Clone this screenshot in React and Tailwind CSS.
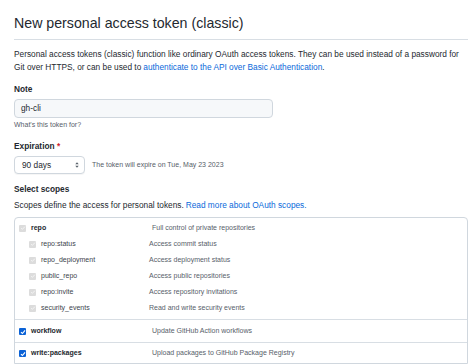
import React from "react";

const font = { fontFamily: '"Liberation Sans", Arial, sans-serif' };

function Check({ checked, disabled }) {
  if (disabled) {
    return (
      <span className="flex h-[7px] w-[7px] shrink-0 items-center justify-center rounded-[1px] bg-[#dcdcdc]">
        <svg viewBox="0 0 8 8" className="h-[6px] w-[6px]">
          <path d="M1.5 4.2 L3.2 5.8 L6.5 2.2" fill="none" stroke="#f4f4f4" strokeWidth="1.3" />
        </svg>
      </span>
    );
  }
  return (
    <span
      className={`flex h-[7px] w-[7px] shrink-0 items-center justify-center rounded-[1px] ${
        checked ? "bg-[#0b62d6]" : "border border-[#767676] bg-white"
      }`}
    >
      {checked && (
        <svg viewBox="0 0 8 8" className="h-[6px] w-[6px]">
          <path d="M1.3 4.2 L3.2 6 L6.7 1.8" fill="none" stroke="#fff" strokeWidth="1.5" />
        </svg>
      )}
    </span>
  );
}

const repoScopes = [
  ["repo:status", "Access commit status"],
  ["repo_deployment", "Access deployment status"],
  ["public_repo", "Access public repositories"],
  ["repo:invite", "Access repository invitations"],
  ["security_events", "Read and write security events"],
];

export default function App() {
  return (
    <div className="h-[364px] w-[474px] overflow-hidden bg-white pl-[14px] pr-[6px] text-[#24292f]" style={font}>
      {/* Title */}
      <div className="border-b border-[#d8dee4] pt-[15px] pb-[8px]">
        <h2 className="text-[14.2px] leading-[16px] font-normal">New personal access token (classic)</h2>
      </div>

      <div className="mt-[8px] text-[8.3px] leading-[13px]">
        <div>
          Personal access tokens (classic) function like ordinary OAuth access tokens. They can be used instead of a password for
        </div>
        <div className="flex gap-[2px]">
          <span>Git over HTTPS, or can be used to</span>
          <span className="text-[#0969da]">authenticate to the API over Basic Authentication</span>
          <span className="-ml-[2px]">.</span>
        </div>
      </div>

      {/* Note */}
      <div className="mt-[9px] text-[8.3px] leading-[12px] font-bold">Note</div>
      <div className="mt-[4px] flex h-[19px] w-[259px] items-center rounded-[4px] border border-[#d0d7de] bg-[#f6f8fa] pl-[6px] text-[8.3px]">
        gh-cli
      </div>
      <div className="mt-[2px] text-[7px] leading-[10px] text-[#57606a]">What's this token for?</div>

      {/* Expiration */}
      <div className="mt-[10px] text-[8.3px] leading-[12px] font-bold">
        Expiration <span className="text-[#cf222e]">*</span>
      </div>
      <div className="mt-[4px] flex items-center">
        <div className="flex h-[18px] w-[71px] items-center justify-between rounded-[4px] border border-[#d0d7de] bg-white pl-[7px] pr-[5px] text-[8.3px] shadow-[0_1px_0_rgba(27,31,36,0.04)]">
          <span>90 days</span>
          <svg viewBox="0 0 6 8" className="h-[6px] w-[4px]">
            <path d="M3 0 L5.6 3 L0.4 3 Z M3 8 L0.4 5 L5.6 5 Z" fill="#57606a" />
          </svg>
        </div>
        <span className="ml-[7px] text-[7px] text-[#57606a]">The token will expire on Tue, May 23 2023</span>
      </div>

      {/* Scopes */}
      <div className="mt-[9px] text-[8.3px] leading-[12px] font-bold">Select scopes</div>
      <div className="mt-[4px] flex gap-[2px] text-[8.3px] leading-[12px]">
        <span>Scopes define the access for personal tokens.</span>
        <span className="text-[#0969da]">Read more about OAuth scopes.</span>
      </div>

      <div className="mt-[6px] rounded-t-[4px] border border-[#d0d7de]">
        <div className="pt-[2px] pb-[3px]">
          <div className="flex h-[16px] items-center pl-[4px] text-[7px]">
            <div className="flex w-[133px] items-center gap-[5px]">
              <Check disabled />
              <span className="font-bold text-[#24292f]">repo</span>
            </div>
            <span className="text-[#57606a]">Full control of private repositories</span>
          </div>
          {repoScopes.map(([name, desc]) => (
            <div key={name} className="flex h-[16px] items-center pl-[14px] text-[7px]">
              <div className="flex w-[120px] items-center gap-[5px]">
                <Check disabled />
                <span className="text-[#3d444d]">{name}</span>
              </div>
              <span className="text-[#57606a]">{desc}</span>
            </div>
          ))}
        </div>

        <div className="flex h-[23px] items-center border-t border-[#d8dee4] pt-[1px] pl-[4px] text-[7px]">
          <div className="flex w-[133px] items-center gap-[5px]">
            <Check checked />
            <span className="font-bold">workflow</span>
          </div>
          <span className="text-[#57606a]">Update GitHub Action workflows</span>
        </div>

        <div className="flex h-[21px] items-center border-t border-[#d8dee4] pt-[1px] pl-[4px] text-[7px]">
          <div className="flex w-[133px] items-center gap-[5px]">
            <Check checked />
            <span className="font-bold">write:packages</span>
          </div>
          <span className="text-[#57606a]">Upload packages to GitHub Package Registry</span>
        </div>
      </div>
    </div>
  );
}
